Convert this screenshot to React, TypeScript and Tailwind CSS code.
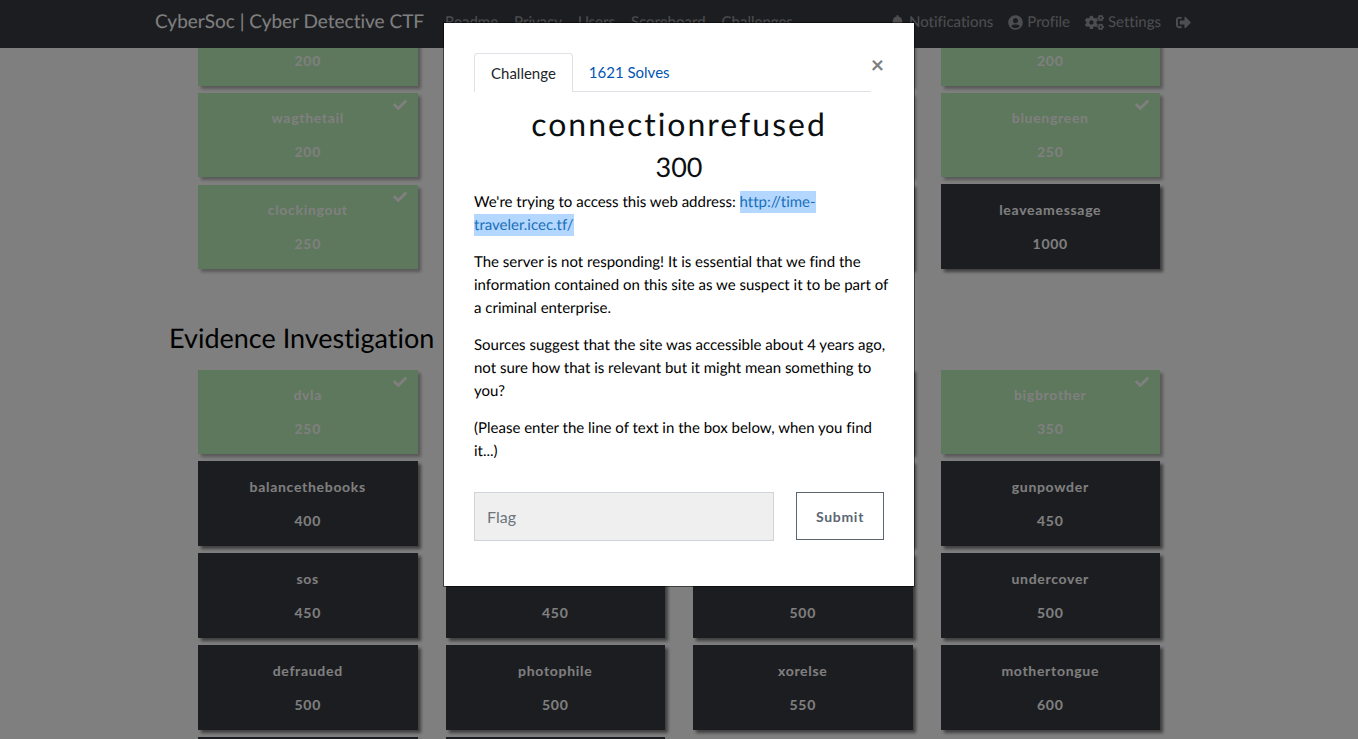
import { FaBell, FaCheck, FaCogs, FaSignOutAlt, FaUserCircle } from "react-icons/fa";

type Challenge = { name?: string; value?: number; solved?: boolean };

const previousRows: Challenge[] = [
  { value: 200, solved: true },
  { solved: true },
  { solved: true },
  { value: 200, solved: true },
  { name: "wagthetail", value: 200, solved: true },
  { solved: true },
  { solved: true },
  { name: "bluengreen", value: 250, solved: true },
  { name: "clockingout", value: 250, solved: true },
  { solved: true },
  {},
  { name: "leaveamessage", value: 1000 },
];

const evidenceRows: Challenge[] = [
  { name: "dvla", value: 250, solved: true },
  { solved: true },
  {},
  { name: "bigbrother", value: 350, solved: true },
  { name: "balancethebooks", value: 400 },
  {},
  {},
  { name: "gunpowder", value: 450 },
  { name: "sos", value: 450 },
  { value: 450 },
  { value: 500 },
  { name: "undercover", value: 500 },
  { name: "defrauded", value: 500 },
  { name: "photophile", value: 500 },
  { name: "xorelse", value: 550 },
  { name: "mothertongue", value: 600 },
  {},
  {},
];

function ChallengeCard({ name, value, solved }: Challenge) {
  return (
    <button
      type="button"
      className={`relative flex w-full flex-col items-center text-[14px] leading-[22px] font-bold tracking-wider text-white ${
        solved
          ? "h-[84px] bg-[#baf0b8] pt-[14px] shadow-[3px_3px_3px_rgba(0,0,0,0.3)]"
          : "h-[85px] bg-[#383a42] pt-[15px] shadow-[3px_3px_3px_rgba(0,0,0,0.5)]"
      }`}
    >
      {solved && <FaCheck aria-hidden className="absolute top-[5px] right-[11px] size-[14px]" />}
      <span className="h-[22px]">{name}</span>
      <span className="mt-3 h-[22px]">{value}</span>
    </button>
  );
}

function ChallengeGrid({ items }: { items: Challenge[] }) {
  return (
    <div className="mx-auto grid max-w-[990px] grid-cols-4 items-end gap-y-[7px]">
      {items.map((item, index) => (
        <div key={index} className="px-[14px]">
          <ChallengeCard {...item} />
        </div>
      ))}
    </div>
  );
}

function Navbar() {
  const links = ["Readme", "Privacy", "Users", "Scoreboard", "Challenges"];
  return (
    <nav className="fixed inset-x-0 top-0 z-10 bg-[#383a42]">
      <div className="mx-auto flex h-12 max-w-[1048px] items-center pb-1 text-[15px] text-white/50">
        <a href="#home" className="mr-[21px] text-[19px] whitespace-nowrap text-white">
          CyberSoc | Cyber Detective CTF
        </a>
        <div className="flex gap-4">
          {links.map((link) => (
            <a key={link} href={`#${link.toLowerCase()}`}>
              {link}
            </a>
          ))}
        </div>
        <div className="ml-auto flex gap-[15px] pr-3">
          <a href="#notifications" className="flex items-center gap-1">
            <FaBell aria-hidden />
            Notifications
          </a>
          <a href="#profile" className="flex items-center gap-1">
            <FaUserCircle aria-hidden />
            Profile
          </a>
          <a href="#settings" className="flex items-center gap-1">
            <FaCogs aria-hidden className="size-[19px]" />
            Settings
          </a>
          <a href="#logout" aria-label="Logout" className="flex items-center">
            <FaSignOutAlt aria-hidden />
          </a>
        </div>
      </div>
    </nav>
  );
}

function ChallengeDialog() {
  return (
    <div
      role="dialog"
      aria-labelledby="challenge-title"
      className="w-full max-w-[472px] border border-black/50 bg-white bg-clip-padding px-[30px] pt-[30px] pb-[45px] text-[15px] leading-[23px] text-black"
    >
      <div className="flex items-start">
        <div role="tablist" className="flex h-[39px] flex-1 items-stretch border-b border-[#dee2e6]">
          <button
            type="button"
            role="tab"
            aria-selected="true"
            className="-mb-px rounded-t border border-b-0 border-[#dee2e6] bg-white px-4 text-[#212529]"
          >
            Challenge
          </button>
          <button type="button" role="tab" aria-selected="false" className="px-4 text-[#0056b3]">
            1621 Solves
          </button>
        </div>
        <button type="button" aria-label="Close" className="text-[23px] leading-[23px] font-bold text-[#7f7f7f]">
          ×
        </button>
      </div>
      <div className="pt-[13px] text-center text-[#0c0f12]">
        <h2 id="challenge-title" className="text-[32px] leading-[38px] tracking-[2px]">
          connectionrefused
        </h2>
        <h3 className="mt-[7px] text-[27px] leading-[33px]">300</h3>
      </div>
      <div className="-mr-2 mt-2 flex flex-col gap-[14px]">
        <p>
          We're trying to access this web address:{" "}
          <a href="#time-traveler" className="bg-[#b3d7ff] py-[2px] text-[#1a6fb8]">
            http://time-traveler.icec.tf/
          </a>
        </p>
        <p>
          The server is not responding! It is essential that we find the information contained on this site as we
          suspect it to be part of a criminal enterprise.
        </p>
        <p>
          Sources suggest that the site was accessible about 4 years ago, not sure how that is relevant but it might
          mean something to you?
        </p>
        <p>(Please enter the line of text in the box below, when you find it...)</p>
      </div>
      <form className="mt-[29px] flex gap-[22px]" onSubmit={(event) => event.preventDefault()}>
        <input
          type="text"
          aria-label="Flag"
          placeholder="Flag"
          className="h-[49px] min-w-0 flex-1 border border-[#ced4da] bg-[#efefef] px-3 text-[16px] placeholder:text-[#6c757d]"
        />
        <button
          type="submit"
          className="h-12 w-[88px] border border-[#5b6673] text-[14px] font-bold tracking-wider text-[#5b6673]"
        >
          Submit
        </button>
      </form>
    </div>
  );
}

export default function App() {
  return (
    <div className="h-screen overflow-hidden bg-white font-['Lato',sans-serif] [font-variant-ligatures:none] [text-rendering:geometricPrecision]">
      <Navbar />
      <main className="pt-[2px]">
        <ChallengeGrid items={previousRows} />
        <h3 className="mx-auto mt-[52px] mb-[15px] max-w-[1020px] text-[27px] leading-[33px] text-black">
          Evidence Investigation
        </h3>
        <ChallengeGrid items={evidenceRows} />
      </main>
      <div className="fixed inset-0 z-20 flex items-start justify-center bg-black/50 pt-[22px]">
        <ChallengeDialog />
      </div>
    </div>
  );
}
